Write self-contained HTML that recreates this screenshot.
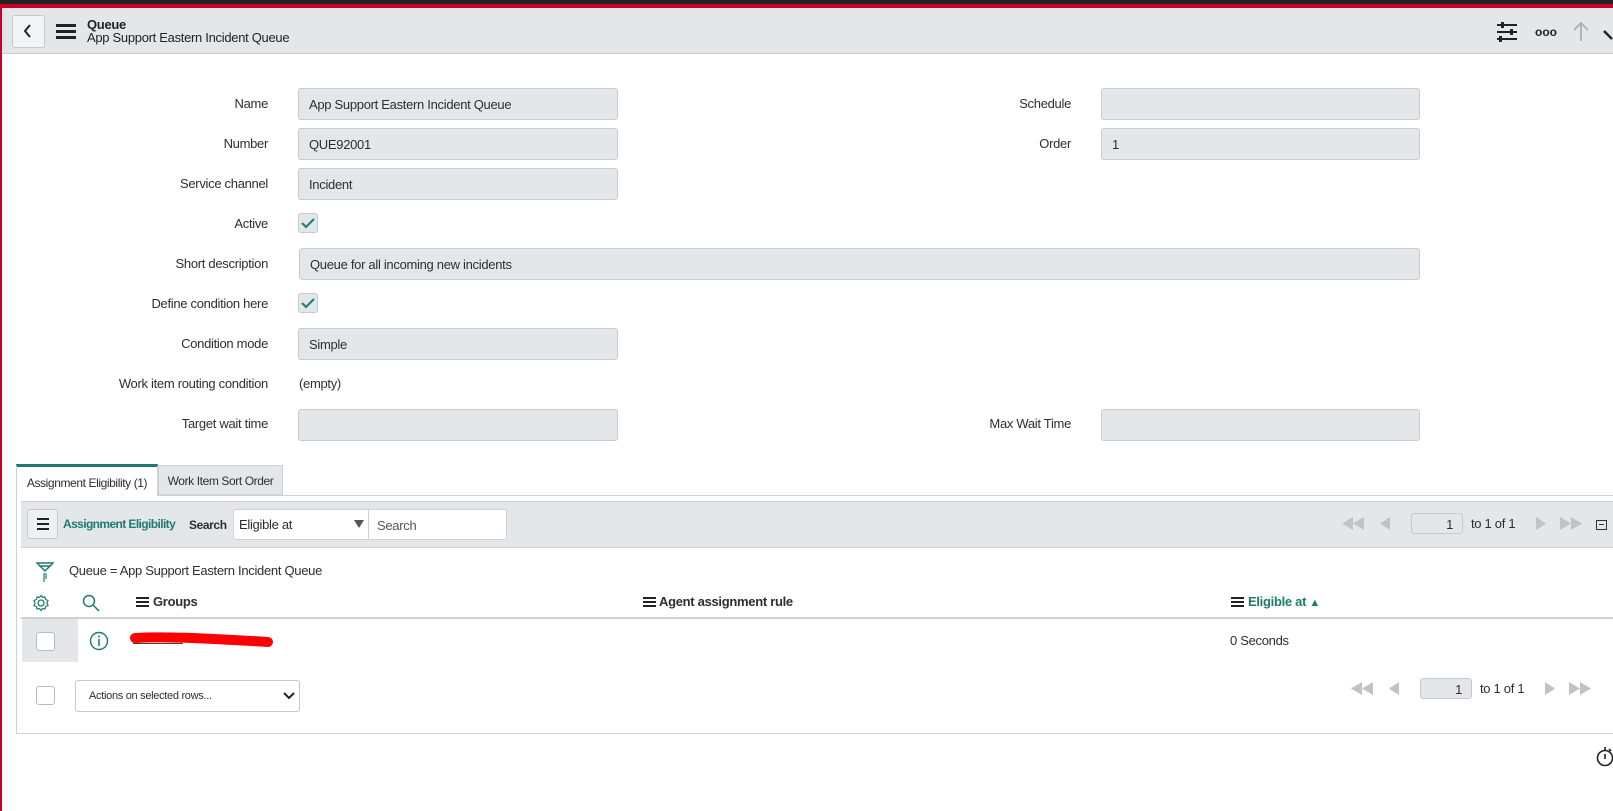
<!DOCTYPE html>
<html><head><meta charset="utf-8"><style>
*{box-sizing:border-box;margin:0;padding:0}
body{width:1613px;height:811px;overflow:hidden;background:#fff;font-family:"Liberation Sans",sans-serif;font-size:13px;color:#2e2e2e;position:relative;letter-spacing:-0.3px}
.a{position:absolute}
.lbl{position:absolute;text-align:right;width:260px;font-size:13px;color:#2e2e2e}
.inp{position:absolute;background:#e4e7ea;border:1px solid #c8cbcf;border-radius:3px;height:32px;padding:8px 10px;font-size:13px;color:#2e2e2e}
.cb{position:absolute;width:20px;height:20px;border:1px solid #c8cbcf;border-radius:3px;background:#e4e7ea}
.wcb{position:absolute;width:19px;height:19px;border:1px solid #bbb;border-radius:3px;background:#fff}
.teal{color:#1f7a6f}
.s12{font-size:12px;letter-spacing:-0.4px}
</style></head><body>
<div class="a" style="left:0;top:0;width:1613px;height:4px;background:#222"></div>
<div class="a" style="left:0;top:4px;width:1613px;height:4px;background:#c8002a"></div>
<div class="a" style="left:0;top:8px;width:2px;height:803px;background:#c8002a"></div>
<div class="a" style="left:2px;top:8px;width:1611px;height:46px;background:#e4e7ea;border-bottom:1px solid #c9cdd1"></div>
<div class="a" style="left:12px;top:15px;width:33px;height:33px;border:1px solid #c5c8cc;border-radius:3px;background:#f3f4f5"></div>
<svg class="a" style="left:22px;top:22px" width="12" height="18" viewBox="0 0 12 18"><path d="M8 3 L3 9 L8 15" fill="none" stroke="#222" stroke-width="2"/></svg>
<div class="a" style="left:56px;top:24px;width:20px;height:3px;background:#222;box-shadow:0 6px 0 #222,0 12px 0 #222"></div>
<div class="a" style="left:87px;top:17px;font-size:13px;font-weight:bold;color:#222">Queue</div>
<div class="a" style="left:87px;top:30px;font-size:13px;color:#222">App Support Eastern Incident Queue</div>
<svg class="a" style="left:1496px;top:21px" width="22" height="22" viewBox="0 0 22 22"><g stroke="#222" stroke-width="2"><path d="M1 4H21M1 11H21M1 18H21"/></g><g fill="#222"><rect x="5" y="1" width="3" height="6"/><rect x="14" y="8" width="3" height="6"/><rect x="3" y="15" width="3" height="6"/></g></svg>
<div class="a" style="left:1535px;top:25px;font-size:12px;font-weight:bold;color:#222;letter-spacing:0">ooo</div>
<svg class="a" style="left:1571px;top:20px" width="20" height="22" viewBox="0 0 20 22"><path d="M10 21V3M3 10L10 3L17 10" fill="none" stroke="#b0b3b7" stroke-width="2"/></svg>
<svg class="a" style="left:1603px;top:28px" width="10" height="14" viewBox="0 0 10 14"><path d="M1 3L9 11" stroke="#222" stroke-width="2.5"/></svg>

<div class="lbl" style="left:8px;top:96px">Name</div>
<div class="inp" style="left:298px;top:88px;width:320px">App Support Eastern Incident Queue</div>
<div class="lbl" style="left:8px;top:136px">Number</div>
<div class="inp" style="left:298px;top:128px;width:320px">QUE92001</div>
<div class="lbl" style="left:8px;top:176px">Service channel</div>
<div class="inp" style="left:298px;top:168px;width:320px">Incident</div>
<div class="lbl" style="left:8px;top:216px">Active</div>
<div class="cb" style="left:298px;top:213px"></div>
<svg class="a" style="left:301px;top:217px" width="14" height="12" viewBox="0 0 14 12"><path d="M1 6L5 10L13 2" fill="none" stroke="#1f7a6f" stroke-width="2"/></svg>
<div class="lbl" style="left:8px;top:256px">Short description</div>
<div class="inp" style="left:299px;top:248px;width:1121px">Queue for all incoming new incidents</div>
<div class="lbl" style="left:8px;top:296px">Define condition here</div>
<div class="cb" style="left:298px;top:293px"></div>
<svg class="a" style="left:301px;top:297px" width="14" height="12" viewBox="0 0 14 12"><path d="M1 6L5 10L13 2" fill="none" stroke="#1f7a6f" stroke-width="2"/></svg>
<div class="lbl" style="left:8px;top:336px">Condition mode</div>
<div class="inp" style="left:298px;top:328px;width:320px">Simple</div>
<div class="lbl" style="left:8px;top:376px">Work item routing condition</div>
<div class="a" style="left:299px;top:376px">(empty)</div>
<div class="lbl" style="left:8px;top:416px">Target wait time</div>
<div class="inp" style="left:298px;top:409px;width:320px"></div>

<div class="lbl" style="left:811px;top:96px">Schedule</div>
<div class="inp" style="left:1101px;top:88px;width:319px"></div>
<div class="lbl" style="left:811px;top:136px">Order</div>
<div class="inp" style="left:1101px;top:128px;width:319px">1</div>
<div class="lbl" style="left:811px;top:416px">Max Wait Time</div>
<div class="inp" style="left:1101px;top:409px;width:319px"></div>

<!-- tabs -->
<div class="a" style="left:16px;top:495px;width:1600px;height:239px;border:1px solid #cfd2d5"></div>
<div class="a s12" style="left:16px;top:464px;width:142px;height:32px;background:#fff;border:1px solid #cfd2d5;border-top:3px solid #1f7a6f;border-bottom:none;padding-top:9px;text-align:center">Assignment Eligibility (1)</div>
<div class="a s12" style="left:158px;top:465px;width:125px;height:30px;background:#e4e7ea;border:1px solid #cfd2d5;padding-top:8px;text-align:center">Work Item Sort Order</div>
<div class="a" style="left:21px;top:501px;width:1592px;height:47px;background:#e4e7ea;border-top:1px solid #cfd2d5;border-bottom:1px solid #cfd2d5"></div>
<div class="a" style="left:27px;top:509px;width:31px;height:30px;border:1px solid #c5c8cc;border-radius:3px;background:#eef0f1"></div>
<div class="a" style="left:37px;top:518px;width:12px;height:2px;background:#222;box-shadow:0 5px 0 #222,0 10px 0 #222"></div>
<div class="a teal s12" style="left:63px;top:517px;font-weight:bold;letter-spacing:-0.6px">Assignment Eligibility</div>
<div class="a s12" style="left:189px;top:518px;font-weight:bold">Search</div>
<div class="a" style="left:233px;top:509px;width:136px;height:31px;background:#fff;border:1px solid #cfd2d5;border-radius:3px 0 0 3px;padding:7px 5px">Eligible at</div>
<svg class="a" style="left:354px;top:520px" width="10" height="8" viewBox="0 0 10 8"><path d="M0 0H10L5 8Z" fill="#555"/></svg>
<div class="a" style="left:368px;top:509px;width:139px;height:31px;background:#fff;border:1px solid #cfd2d5;border-radius:0 3px 3px 0;padding:8px 8px;color:#555">Search</div>
<svg class="a" style="left:1342px;top:517px" width="250" height="13" viewBox="0 0 250 13"><g fill="#c0c3c6"><path d="M0 6.5L11 0V13Z M11 6.5L22 0V13Z M38 6.5L48 0V13Z M194 0L204 6.5L194 13Z M218 0L229 6.5L218 13Z M229 0L240 6.5L229 13Z"/></g></svg>
<div class="a" style="left:1411px;top:513px;width:52px;height:21px;background:#e4e7ea;border:1px solid #c5c8cc;border-radius:3px;text-align:right;padding:3px 9px">1</div>
<div class="a" style="left:1471px;top:516px">to 1 of 1</div>
<div class="a" style="left:1596px;top:520px;width:11px;height:10px;border:1px solid #333"></div>
<div class="a" style="left:1599px;top:524px;width:5px;height:1px;background:#333"></div>

<!-- filter -->
<svg class="a" style="left:36px;top:561px" width="18" height="22" viewBox="0 0 18 22"><path d="M1 2H17L9 10Z M3 5H15" fill="none" stroke="#1f7a6f" stroke-width="1.5"/><path d="M8 12V21M10 12V18" stroke="#1f7a6f" stroke-width="1.2"/></svg>
<div class="a" style="left:69px;top:563px">Queue = App Support Eastern Incident Queue</div>
<svg class="a" style="left:32px;top:594px" width="18" height="18" viewBox="0 0 18 18"><circle cx="9" cy="9" r="3" fill="none" stroke="#1f7a6f" stroke-width="1.3"/><path d="M9 1.5L10.5 3.5L13 3L13.5 5.5L16 6.5L15 9L16 11.5L13.5 12.5L13 15L10.5 14.5L9 16.5L7.5 14.5L5 15L4.5 12.5L2 11.5L3 9L2 6.5L4.5 5.5L5 3L7.5 3.5Z" fill="none" stroke="#1f7a6f" stroke-width="1.2"/></svg>
<svg class="a" style="left:82px;top:594px" width="18" height="18" viewBox="0 0 18 18"><circle cx="7" cy="7" r="5.5" fill="none" stroke="#1f7a6f" stroke-width="1.5"/><path d="M11 11L17 17" stroke="#1f7a6f" stroke-width="1.5"/></svg>
<div class="a" style="left:136px;top:597px;width:13px;height:2px;background:#222;box-shadow:0 4px 0 #222,0 8px 0 #222"></div>
<div class="a" style="left:153px;top:594px;font-weight:bold">Groups</div>
<div class="a" style="left:643px;top:597px;width:13px;height:2px;background:#222;box-shadow:0 4px 0 #222,0 8px 0 #222"></div>
<div class="a" style="left:659px;top:594px;font-weight:bold">Agent assignment rule</div>
<div class="a" style="left:1231px;top:597px;width:13px;height:2px;background:#222;box-shadow:0 4px 0 #222,0 8px 0 #222"></div>
<div class="a teal" style="left:1248px;top:594px;font-weight:bold">Eligible at <span style="font-size:11px">▲</span></div>
<div class="a" style="left:21px;top:617px;width:1592px;height:2px;background:#cfd2d5"></div>
<div class="a" style="left:22px;top:619px;width:56px;height:43px;background:#e4e7ea"></div>
<div class="wcb" style="left:36px;top:632px"></div>
<svg class="a" style="left:89px;top:631px" width="20" height="20" viewBox="0 0 20 20"><circle cx="10" cy="10" r="8.5" fill="none" stroke="#1f7a6f" stroke-width="1.4"/><path d="M10 8V15" stroke="#1f7a6f" stroke-width="1.6"/><circle cx="10" cy="5.5" r="1" fill="#1f7a6f"/></svg>
<div class="a" style="left:133px;top:643px;width:50px;height:1px;background:#444"></div>
<svg class="a" style="left:128px;top:628px" width="150" height="24" viewBox="0 0 150 24"><path d="M7 10C40 8 90 11 140 14" stroke="#f00" stroke-width="10" stroke-linecap="round" fill="none"/></svg>
<div class="a" style="left:1230px;top:633px">0 Seconds</div>

<div class="wcb" style="left:36px;top:686px"></div>
<div class="a" style="left:75px;top:680px;width:225px;height:32px;border:1px solid #c5c8cc;border-radius:3px;background:#fff;padding:9px 13px;font-size:11px">Actions on selected rows...</div>
<svg class="a" style="left:283px;top:692px" width="12" height="8" viewBox="0 0 12 8"><path d="M1 1L6 6L11 1" fill="none" stroke="#222" stroke-width="2"/></svg>
<svg class="a" style="left:1351px;top:682px" width="250" height="13" viewBox="0 0 250 13"><g fill="#c0c3c6"><path d="M0 6.5L11 0V13Z M11 6.5L22 0V13Z M38 6.5L48 0V13Z M194 0L204 6.5L194 13Z M218 0L229 6.5L218 13Z M229 0L240 6.5L229 13Z"/></g></svg>
<div class="a" style="left:1420px;top:678px;width:52px;height:21px;background:#e4e7ea;border:1px solid #c5c8cc;border-radius:3px;text-align:right;padding:3px 9px">1</div>
<div class="a" style="left:1480px;top:681px">to 1 of 1</div>

<svg class="a" style="left:1596px;top:745px" width="17" height="22" viewBox="0 0 17 22"><circle cx="9" cy="13" r="7.5" fill="none" stroke="#222" stroke-width="1.6"/><path d="M9 9V14M9 2V5M13 4L15 6" stroke="#222" stroke-width="1.6"/></svg>
</body></html>
